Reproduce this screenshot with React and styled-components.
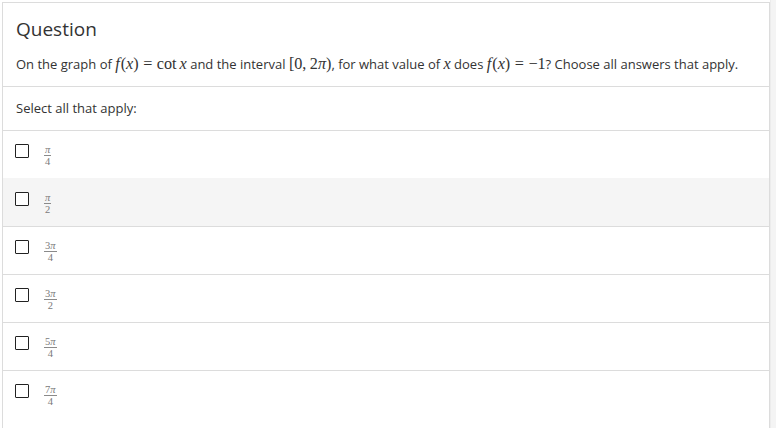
import React from "react";
import styled, { createGlobalStyle } from "styled-components";

const Global = createGlobalStyle`
  html, body { margin: 0; padding: 0; background: #fff; }
  body { font-family: "Open Sans", "Liberation Sans", sans-serif; color: #333; }
`;

const Page = styled.div`
  display: flex;
  height: 428px;
  overflow: hidden;
`;

const Main = styled.div`
  width: 768px;
  padding: 2px 0 0 2px;
  background: #fff;
`;

const Gutter = styled.div`
  flex: 1;
  background: #f4f4f4;
  border-left: 1px solid #ececec;
`;

const Card = styled.div`
  border: 1px solid #dcdcdc;
  border-bottom: none;
  min-height: 440px;
  background: #fff;
`;

const Header = styled.div`
  padding: 12px 13px 11px;
  border-bottom: 1px solid #dcdcdc;
`;

const Title = styled.h2`
  margin: 0;
  font-size: 19px;
  line-height: 28px;
  font-weight: 400;
  color: #333;
`;

const Prompt = styled.p`
  margin: 10px 0 0;
  font-size: 13px;
  line-height: 22px;
  color: #333;
  white-space: nowrap;
`;

const M = styled.span`
  font-family: "Liberation Serif", "DejaVu Serif", serif;
  font-size: 16.2px;
  line-height: 1;
  font-style: ${(p) => (p.$i ? "italic" : "normal")};
  margin: 0 ${(p) => p.$r || 0}px 0 ${(p) => p.$l || 0}px;
`;

const Instructions = styled.div`
  padding: 11px 13px 12px;
  font-size: 13px;
  line-height: 20px;
  border-bottom: 1px solid #dcdcdc;
`;

const Row = styled.label`
  display: flex;
  align-items: flex-start;
  height: 48px;
  box-sizing: border-box;
  padding: 13px 0 0 12px;
  border-top: 1px solid ${(p) => (p.$hover ? "#f5f5f5" : "#dcdcdc")};
  background: ${(p) => (p.$hover ? "#f5f5f5" : "#fff")};
  &:first-of-type { border-top: none; height: 47px; }
`;

const Box = styled.span`
  width: 14px;
  height: 14px;
  box-sizing: border-box;
  border: 1.5px solid #222;
  border-radius: 1px;
  background: #fff;
  flex: none;
`;

const Frac = styled.span`
  display: inline-flex;
  flex-direction: column;
  align-items: center;
  margin-left: 15px;
  margin-top: 1px;
  font-family: "Liberation Serif", "DejaVu Serif", serif;
  font-size: 10.5px;
  line-height: 9px;
  color: #7a7a7a;
`;

const Num = styled.span`
  padding: 0 1px 1px;
  border-bottom: 1px solid #8a8a8a;
`;

const Den = styled.span`
  padding-top: 1px;
`;

const Pi = styled.i`
  font-style: italic;
`;

const options = [
  { n: "", d: "4" },
  { n: "", d: "2", hover: true },
  { n: "3", d: "4" },
  { n: "3", d: "2" },
  { n: "5", d: "4" },
  { n: "7", d: "4" },
];

export default function App() {
  return (
    <Page>
      <Global />
      <Main>
        <Card>
          <Header>
            <Title>Question</Title>
            <Prompt>
              On the graph of <M $i $r={1}>f</M><M>(</M><M $i>x</M><M>)</M><M $l={4.5} $r={4.5}>=</M>
              <M>cot</M><M $i $l={3}>x</M> and the interval{" "}
              <M>[0,</M> <M>2</M><M $i>π</M><M>)</M>, for what value of <M $i>x</M> does{" "}
              <M $i $r={1}>f</M><M>(</M><M $i>x</M><M>)</M><M $l={4.5} $r={4.5}>=</M><M>−1</M>? Choose
              all answers that apply.
            </Prompt>
          </Header>
          <Instructions>Select all that apply:</Instructions>
          {options.map((o, i) => (
            <Row key={i} $hover={o.hover}>
              <Box />
              <Frac>
                <Num>
                  {o.n}
                  <Pi>π</Pi>
                </Num>
                <Den>{o.d}</Den>
              </Frac>
            </Row>
          ))}
        </Card>
      </Main>
      <Gutter />
    </Page>
  );
}
